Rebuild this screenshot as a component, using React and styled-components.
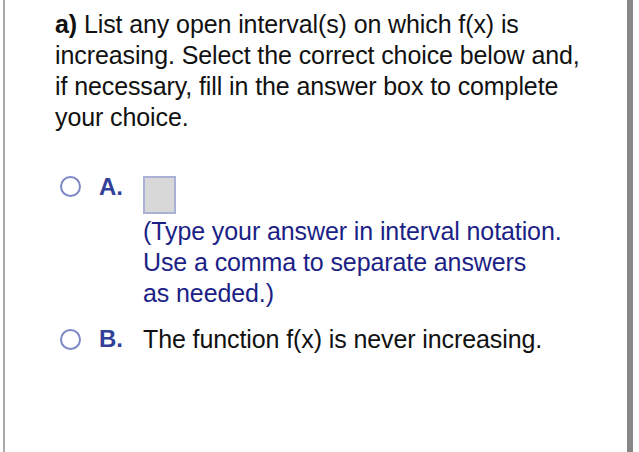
import React from 'react';
import styled, { createGlobalStyle } from 'styled-components';

const GlobalStyle = createGlobalStyle`
  body {
    margin: 0;
    background: #ffffff;
    font-family: "Liberation Sans", Arial, sans-serif;
  }
`;

const Frame = styled.div`
  width: 639px;
  height: 452px;
  display: grid;
  grid-template-columns: 3px 2px 622px 6px 6px;
  overflow: hidden;
`;

const Rule = styled.div`
  background: ${(p) => p.color};
`;

const Panel = styled.div`
  padding: 9px 0 0 50px;
  color: #111;
`;

const Question = styled.p`
  margin: 0;
  font-size: 25px;
  line-height: 31px;
  letter-spacing: -0.1px;
  white-space: nowrap;
`;

const Choices = styled.div`
  margin-top: 43px;
  display: flex;
  flex-direction: column;
  gap: 15px;
  padding-left: 5px;
`;

const Choice = styled.div`
  display: grid;
  grid-template-columns: 21px 62px 1fr;
  align-items: start;
`;

const Radio = styled.span`
  width: 21px;
  height: 21px;
  box-sizing: border-box;
  border-radius: 50%;
  border: 2.5px solid #7f88c6;
  margin-top: ${(p) => p.top}px;
`;

const Letter = styled.span`
  font-size: 24px;
  font-weight: bold;
  color: #33409a;
  padding-left: 18px;
  line-height: 24px;
  margin-top: ${(p) => p.top}px;
`;

const Body = styled.div`
  display: flex;
  flex-direction: column;
`;

const AnswerBox = styled.div`
  width: 33px;
  height: 38px;
  box-sizing: border-box;
  background: #d8d8d8;
  border: 2px solid #aab0d6;
  margin-bottom: 2px;
`;

const Hint = styled.p`
  margin: 0;
  font-size: 25px;
  line-height: 31px;
  letter-spacing: -0.1px;
  color: #1c1f86;
  white-space: nowrap;
`;

const Statement = styled.p`
  margin: 0;
  font-size: 25px;
  line-height: 31px;
  letter-spacing: -0.1px;
  color: #111;
`;

export default function App() {
  return (
    <>
      <GlobalStyle />
      <Frame>
        <div />
        <Rule color="#a9a9a9" />
        <Panel>
          <Question>
            <b>a)</b> List any open interval(s) on which f(x) is
            <br />
            increasing. Select the correct choice below and,
            <br />
            if necessary, fill in the answer box to complete
            <br />
            your choice.
          </Question>
          <Choices>
            <Choice>
              <Radio top={0} />
              <Letter top={-1}>A.</Letter>
              <Body>
                <AnswerBox />
                <Hint>
                  (Type your answer in interval notation.
                  <br />
                  Use a comma to separate answers
                  <br />
                  as needed.)
                </Hint>
              </Body>
            </Choice>
            <Choice>
              <Radio top={5} />
              <Letter top={3}>B.</Letter>
              <Statement>The function f(x) is never increasing.</Statement>
            </Choice>
          </Choices>
        </Panel>
        <Rule color="#878787" />
        <div />
      </Frame>
    </>
  );
}
